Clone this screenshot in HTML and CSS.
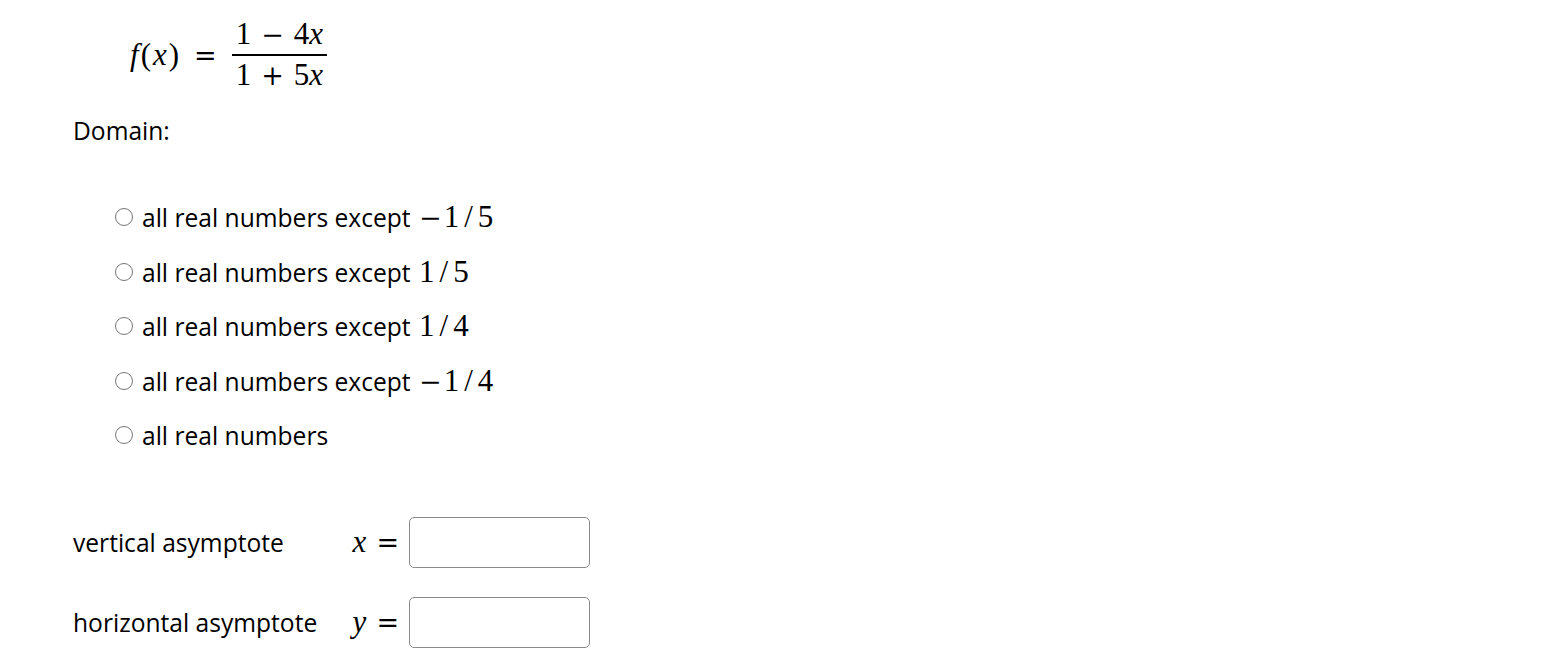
FILE: index.html
```html
<!DOCTYPE html>
<html>
<head>
<meta charset="utf-8">
<link rel="stylesheet" href="styles.css">
</head>
<body>
<div class="page">
  <div class="formula">
    <span class="math fx"><i>f</i>(<i>x</i>)</span>
    <span class="math eq op-font">=</span>
    <span class="frac">
      <span class="num math">1<span class="op op-font">−</span>4<i>x</i></span>
      <span class="den math">1<span class="op op-font">+</span>5<i>x</i></span>
    </span>
  </div>

  <div class="domain">Domain:</div>

  <div class="options">
    <label class="option"><span class="radio"></span><span>all real numbers except <span class="math m"><span class="neg op-font">−</span>1<span class="sl">/</span>5</span></span></label>
    <label class="option"><span class="radio"></span><span>all real numbers except <span class="math m">1<span class="sl">/</span>5</span></span></label>
    <label class="option"><span class="radio"></span><span>all real numbers except <span class="math m">1<span class="sl">/</span>4</span></span></label>
    <label class="option"><span class="radio"></span><span>all real numbers except <span class="math m"><span class="neg op-font">−</span>1<span class="sl">/</span>4</span></span></label>
    <label class="option"><span class="radio"></span><span>all real numbers</span></label>
  </div>

  <div class="asym">
    <div class="row">
      <span class="label">vertical asymptote</span>
      <span class="math var"><i>x</i><span class="eq2 op-font">=</span></span>
      <span class="box"></span>
    </div>
    <div class="row">
      <span class="label">horizontal asymptote</span>
      <span class="math var"><i>y</i><span class="eq2 op-font">=</span></span>
      <span class="box"></span>
    </div>
  </div>
</div>
</body>
</html>
```
FILE: styles.css
```css
html, body {
  margin: 0;
  padding: 0;
  background: #fff;
}
.page {
  padding-left: 73px;
  font-family: "Open Sans", "Noto Sans", sans-serif;
  font-size: 24.6px;
  color: #000;
}
.math {
  font-family: "Liberation Serif", "DejaVu Serif", serif;
  font-size: 31px;
}
.math i { font-style: italic; }
.op-font {
  font-family: "DejaVu Serif", "Liberation Serif", serif;
  font-size: 27px;
  font-weight: 300;
}
.formula {
  display: flex;
  align-items: center;
  margin-left: 57px;
  padding-top: 16px;
  height: 78px;
}
.fx { letter-spacing: 2px; }
.eq { margin: 0 15px 0 13px; }
.frac {
  display: inline-flex;
  flex-direction: column;
  align-items: center;
}
.num, .den {
  padding: 0 4px;
  line-height: 34px;
}
.num { border-bottom: 2px solid #000; padding-bottom: 2px; }
.den { padding-top: 2px; }
.op { margin: 0 10px; }
.domain {
  margin-top: 22px;
  line-height: 30px;
}
.options {
  margin-top: 44px;
  padding-left: 41px;
  display: flex;
  flex-direction: column;
}
.option {
  display: flex;
  align-items: center;
  height: 54.5px;
}
.radio {
  width: 16px;
  height: 16px;
  border: 1.5px solid #767676;
  border-radius: 50%;
  margin-right: 9px;
  margin-left: 1px;
  flex: none;
}
.m { margin-left: 2px; }
.neg { margin-right: 2px; }
.sl { margin: 0 5px; }
.asym {
  margin-top: 54px;
  display: flex;
  flex-direction: column;
  gap: 29px;
}
.row {
  display: flex;
  align-items: center;
  height: 51px;
}
.label { width: 277px; }
.var {
  width: 49px;
  text-align: right;
  margin-right: 10px;
}
.eq2 { margin-left: 10px; }
.box {
  width: 179px;
  height: 49px;
  border: 1px solid #8a8a8a;
  border-radius: 5px;
}
```
